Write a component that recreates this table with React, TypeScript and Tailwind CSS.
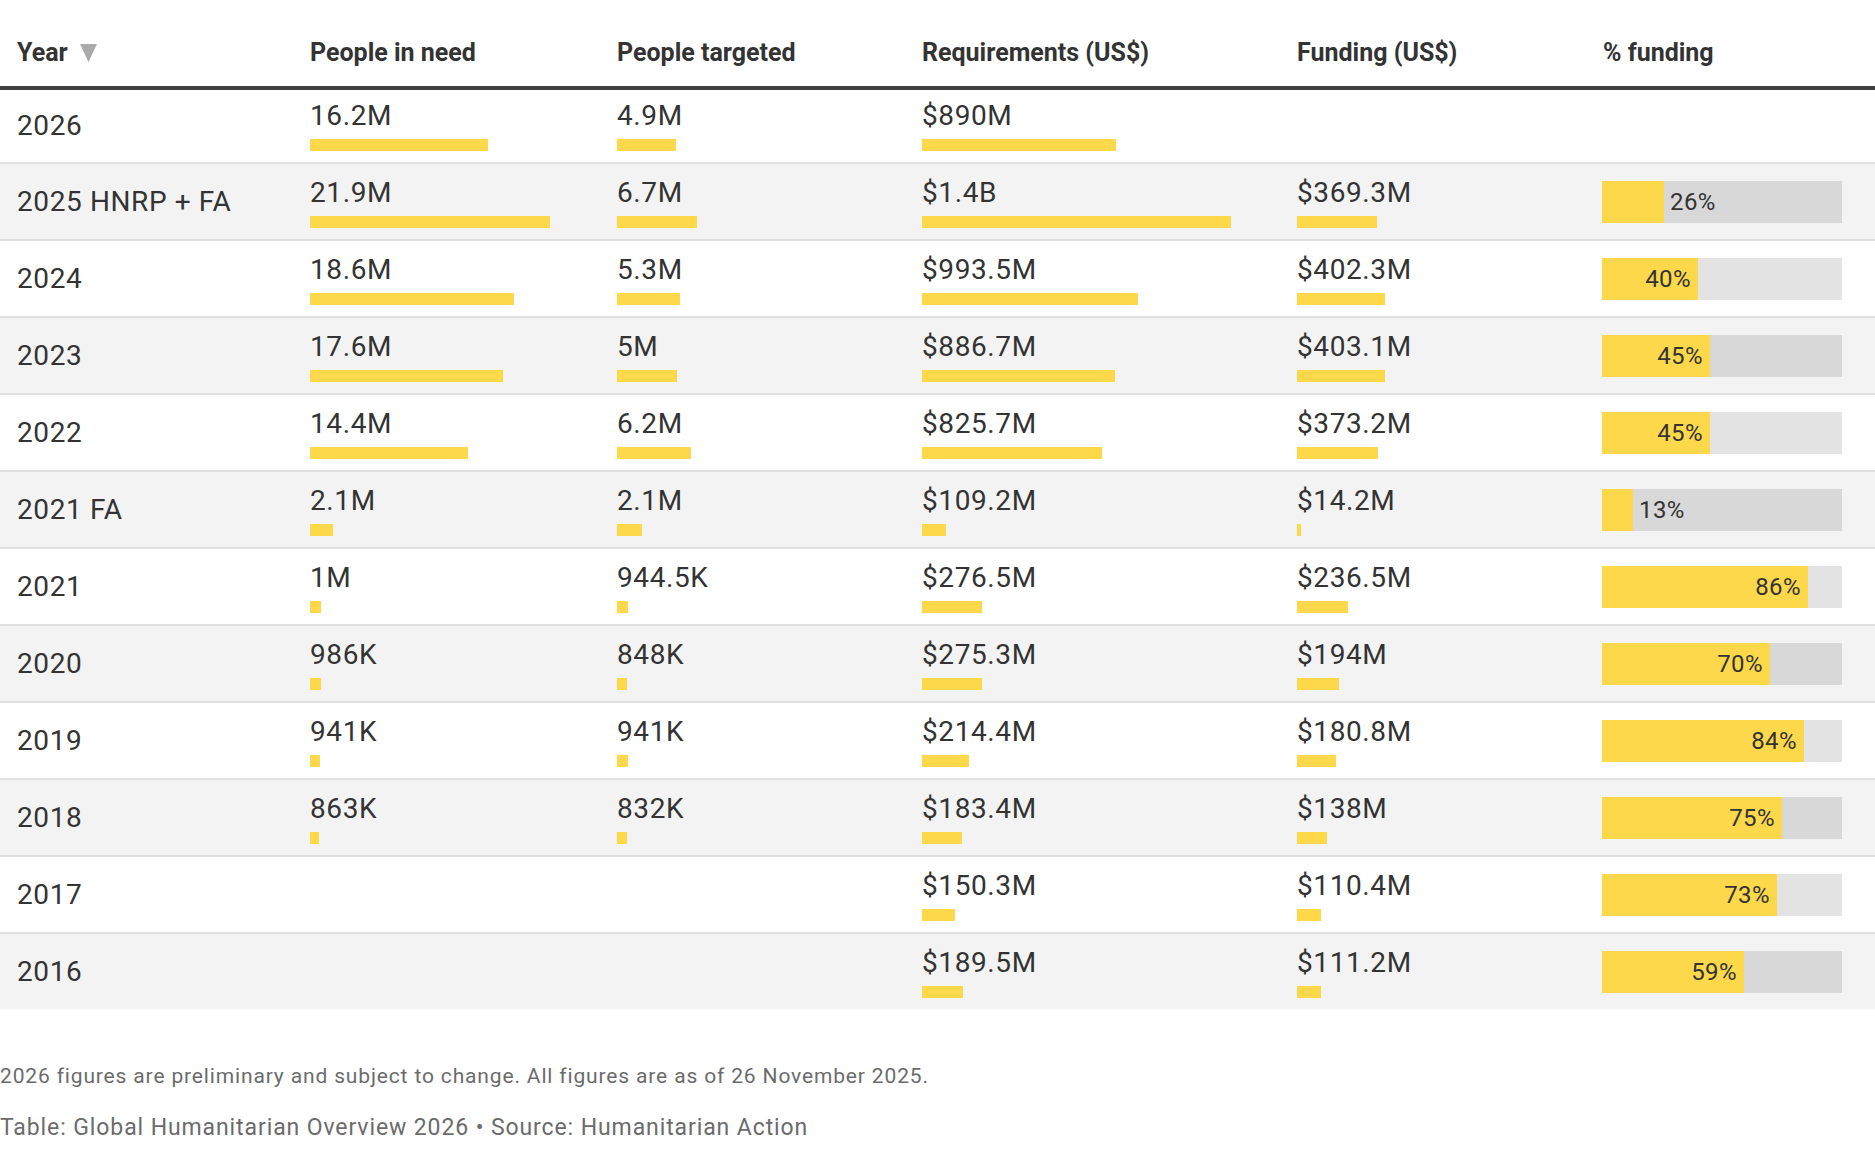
import React from 'react';

type Row = {
  year: string;
  need?: [string, number];
  targeted?: [string, number];
  req?: [string, number];
  fund?: [string, number];
  pct?: number;
};

// bar scales measured off the chart (px per million)
const NEED = 240 / 21.9;
const TARG = 80 / 6.7;
const USD = 0.2175;

const rows: Row[] = [
  { year: '2026', need: ['16.2M', 16.2 * NEED], targeted: ['4.9M', 4.9 * TARG], req: ['$890M', 890 * USD] },
  { year: '2025 HNRP + FA', need: ['21.9M', 21.9 * NEED], targeted: ['6.7M', 6.7 * TARG], req: ['$1.4B', 309], fund: ['$369.3M', 369.3 * USD], pct: 26 },
  { year: '2024', need: ['18.6M', 18.6 * NEED], targeted: ['5.3M', 5.3 * TARG], req: ['$993.5M', 993.5 * USD], fund: ['$402.3M', 402.3 * USD], pct: 40 },
  { year: '2023', need: ['17.6M', 17.6 * NEED], targeted: ['5M', 5 * TARG], req: ['$886.7M', 886.7 * USD], fund: ['$403.1M', 403.1 * USD], pct: 45 },
  { year: '2022', need: ['14.4M', 14.4 * NEED], targeted: ['6.2M', 6.2 * TARG], req: ['$825.7M', 825.7 * USD], fund: ['$373.2M', 373.2 * USD], pct: 45 },
  { year: '2021 FA', need: ['2.1M', 2.1 * NEED], targeted: ['2.1M', 2.1 * TARG], req: ['$109.2M', 109.2 * USD], fund: ['$14.2M', 4], pct: 13 },
  { year: '2021', need: ['1M', 1 * NEED], targeted: ['944.5K', 0.9445 * TARG], req: ['$276.5M', 276.5 * USD], fund: ['$236.5M', 236.5 * USD], pct: 86 },
  { year: '2020', need: ['986K', 0.986 * NEED], targeted: ['848K', 0.848 * TARG], req: ['$275.3M', 275.3 * USD], fund: ['$194M', 194 * USD], pct: 70 },
  { year: '2019', need: ['941K', 0.941 * NEED], targeted: ['941K', 0.941 * TARG], req: ['$214.4M', 214.4 * USD], fund: ['$180.8M', 180.8 * USD], pct: 84 },
  { year: '2018', need: ['863K', 0.863 * NEED], targeted: ['832K', 0.832 * TARG], req: ['$183.4M', 183.4 * USD], fund: ['$138M', 138 * USD], pct: 75 },
  { year: '2017', req: ['$150.3M', 150.3 * USD], fund: ['$110.4M', 110.4 * USD], pct: 73 },
  { year: '2016', req: ['$189.5M', 189.5 * USD], fund: ['$111.2M', 111.2 * USD], pct: 59 },
];

const cols = 'grid grid-cols-[277px_307px_305px_375px_306px_305px]';

function BarCell({ v }: { v?: [string, number] }) {
  return (
    <div className="flex flex-col justify-end pl-[33px] pb-[11px]">
      {v && (
        <>
          <div className="text-[28px] leading-none tracking-[0.6px]">{v[0]}</div>
          <div className="mt-[9px] h-[12px] bg-[#fdd84a]" style={{ width: Math.max(3, Math.round(v[1])) }} />
        </>
      )}
    </div>
  );
}

function PctCell({ pct }: { pct?: number }) {
  if (pct === undefined) return <div />;
  const w = Math.round((pct * 240) / 100);
  const inside = pct >= 35;
  return (
    <div className="flex items-center pl-[32px] pt-[1px]">
      <div className="flex h-[42px] w-[240px] bg-[rgba(0,0,0,0.11)]">
        <div className="flex h-full items-center justify-end bg-[#fdd84a] pr-[7px]" style={{ width: w }}>
          {inside && <span className="text-[24px] tracking-[0.4px]">{pct}%</span>}
        </div>
        {!inside && <span className="ml-[6px] self-center text-[24px] tracking-[0.4px]">{pct}%</span>}
      </div>
    </div>
  );
}

export default function App() {
  return (
    <div className="min-h-screen w-[1875px] bg-white text-[#333] font-['Roboto',sans-serif]">
      {/* header */}
      <div className={`${cols} h-[90px] border-b-[4px] border-[#404040] items-end pb-[15px] text-[25px] font-bold`}>
        <div className="flex items-center pl-[17px]">
          <span>Year</span>
          <svg className="ml-[12px] mt-[2px]" width="17" height="18" viewBox="0 0 17 18">
            <polygon points="0,0 17,0 8.5,18" fill="#aaa" />
          </svg>
        </div>
        <div className="pl-[33px]">People in need</div>
        <div className="pl-[33px]">People targeted</div>
        <div className="pl-[33px]">Requirements (US$)</div>
        <div className="pl-[33px]">Funding (US$)</div>
        <div className="pl-[33px]">% funding</div>
      </div>

      {rows.map((r, i) => (
        <div
          key={r.year + i}
          className={`${cols} ${i === 0 ? 'h-[72px]' : 'h-[77px] border-t-2 border-[#e0e0e0]'} ${i % 2 === 1 ? 'bg-[#f3f3f3]' : 'bg-white'}`}
        >
          <div className="flex items-center pl-[17px] text-[28px] tracking-[0.6px]">{r.year}</div>
          <BarCell v={r.need} />
          <BarCell v={r.targeted} />
          <BarCell v={r.req} />
          <BarCell v={r.fund} />
          <PctCell pct={r.pct} />
        </div>
      ))}

      <div className="pt-[52px] text-[#6b6b6b]">
        <p className="text-[21px] tracking-[0.85px]">
          2026 figures are preliminary and subject to change. All figures are as of 26 November 2025.
        </p>
        <p className="mt-[18px] text-[23px] tracking-[0.9px]">
          Table: Global Humanitarian Overview 2026 • Source: Humanitarian Action
        </p>
      </div>
    </div>
  );
}
